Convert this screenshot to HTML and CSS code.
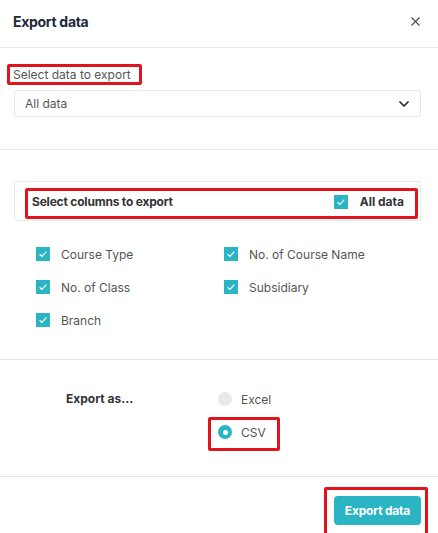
FILE: index.html
```html
<!DOCTYPE html>
<html>
<head>
<meta charset="utf-8">
<link rel="stylesheet" href="styles.css">
</head>
<body>
<div class="modal">
  <div class="header">
    <h1 class="title">Export data</h1>
    <button class="close" aria-label="Close">
      <svg width="9" height="9" viewBox="0 0 9 9"><path d="M0.5 0.5 L8.5 8.5 M8.5 0.5 L0.5 8.5" stroke="#4a4a4a" stroke-width="1.1" fill="none"/></svg>
    </button>
  </div>

  <div class="section section-data">
    <div class="mark mark-label"><span class="label">Select data to export</span></div>
    <div class="select">
      <span class="select-value">All data</span>
      <svg class="chevron" width="10" height="6" viewBox="0 0 10 6"><path d="M1 1 L5 5 L9 1" stroke="#1f2a36" stroke-width="1.7" fill="none" stroke-linecap="round" stroke-linejoin="round"/></svg>
    </div>
  </div>

  <div class="section section-cols">
    <div class="cols-box">
      <div class="mark mark-cols">
        <span class="cols-title">Select columns to export</span>
        <span class="check-item all">
          <span class="check"><svg width="14" height="14" viewBox="0 0 14 14"><path d="M3.6 7.3 L5.9 9.4 L10.3 4.6" stroke="#fff" stroke-width="1.2" fill="none"/></svg></span>
          <span class="all-text">All data</span>
        </span>
      </div>
    </div>
    <div class="cols-grid">
      <span class="check-item"><span class="check"><svg width="14" height="14" viewBox="0 0 14 14"><path d="M3.6 7.3 L5.9 9.4 L10.3 4.6" stroke="#fff" stroke-width="1.2" fill="none"/></svg></span><span class="item-text">Course Type</span></span>
      <span class="check-item"><span class="check"><svg width="14" height="14" viewBox="0 0 14 14"><path d="M3.6 7.3 L5.9 9.4 L10.3 4.6" stroke="#fff" stroke-width="1.2" fill="none"/></svg></span><span class="item-text">No. of Course Name</span></span>
      <span class="check-item"><span class="check"><svg width="14" height="14" viewBox="0 0 14 14"><path d="M3.6 7.3 L5.9 9.4 L10.3 4.6" stroke="#fff" stroke-width="1.2" fill="none"/></svg></span><span class="item-text">No. of Class</span></span>
      <span class="check-item"><span class="check"><svg width="14" height="14" viewBox="0 0 14 14"><path d="M3.6 7.3 L5.9 9.4 L10.3 4.6" stroke="#fff" stroke-width="1.2" fill="none"/></svg></span><span class="item-text">Subsidiary</span></span>
      <span class="check-item"><span class="check"><svg width="14" height="14" viewBox="0 0 14 14"><path d="M3.6 7.3 L5.9 9.4 L10.3 4.6" stroke="#fff" stroke-width="1.2" fill="none"/></svg></span><span class="item-text">Branch</span></span>
    </div>
  </div>

  <div class="section section-format">
    <span class="format-label">Export as...</span>
    <div class="radios">
      <div class="radio-row excel"><span class="radio"></span><span class="radio-text">Excel</span></div>
      <div class="mark mark-csv"><div class="radio-row"><span class="radio on"></span><span class="radio-text">CSV</span></div></div>
    </div>
  </div>

  <div class="footer">
    <div class="mark mark-btn"><button class="export-btn">Export data</button></div>
  </div>
</div>
</body>
</html>
```

FILE: styles.css
```css
* { box-sizing: border-box; }
html, body { margin: 0; padding: 0; background: #fff; }
body {
  font-family: Inter, "Open Sans", "Liberation Sans", sans-serif;
  color: #555;
  width: 438px;
  height: 533px;
  overflow: hidden;
}
.modal { width: 438px; }

.header {
  height: 48px;
  display: flex;
  align-items: center;
  justify-content: space-between;
  padding: 0 18px 5px 13px;
  border-bottom: 1px solid #eaeaea;
}
.title {
  margin: 0;
  font-size: 14px;
  font-weight: 700;
  color: #1c2a3a;
  letter-spacing: -0.3px;
}
.close {
  border: 0;
  background: none;
  padding: 0;
  width: 9px;
  height: 9px;
  display: flex;
}

.mark {
  border: 3px solid #e0141c;
  border-radius: 2px;
}

.section { border-bottom: 1px solid #e6e6e6; }

.section-data {
  display: flex;
  flex-direction: column;
  align-items: flex-start;
  padding: 16px 17px 32px 0;
}
.mark-label {
  margin-left: 7px;
  padding: 0 8px 0 3px;
  height: 21px;
}
.label {
  font-size: 12px;
  line-height: 15px;
  display: block;
  color: #555;
}
.select {
  align-self: stretch;
  margin: 5px 0 0 14px;
  height: 27px;
  border: 1px solid #e8e8e8;
  border-radius: 2px;
  display: flex;
  align-items: center;
  justify-content: space-between;
  padding: 0 11px 0 10px;
}
.select-value { font-size: 12px; color: #555; }

.section-cols { padding: 31px 17px 32px 14px; }
.cols-box {
  border: 1px solid #ececec;
  height: 40px;
  padding: 6px 2px 1px 10px;
}
.mark-cols {
  height: 31px;
  display: flex;
  align-items: center;
  justify-content: space-between;
  padding: 0 11px 4px 4px;
}
.cols-title {
  font-size: 12px;
  font-weight: 700;
  color: #333;
  letter-spacing: -0.2px;
}
.check-item {
  display: flex;
  align-items: center;
  height: 14px;
}
.check {
  width: 14px;
  height: 14px;
  background: #2bb5c4;
  display: flex;
  flex: none;
}
.all .check { margin-right: 12px; }
.all-text { font-size: 12px; font-weight: 700; color: #333; }

.cols-grid {
  display: grid;
  grid-template-columns: 188px 1fr;
  row-gap: 19px;
  padding: 26px 0 0 22px;
}
.item-text {
  font-size: 12px;
  color: #555;
  margin-left: 11px;
}

.section-format {
  display: flex;
  align-items: flex-start;
  padding: 32px 0 25px 66px;
}
.format-label {
  width: 142px;
  font-size: 12px;
  font-weight: 700;
  color: #333;
  line-height: 14px;
}
.radios { display: flex; flex-direction: column; }
.radio-row {
  display: flex;
  align-items: center;
  height: 14px;
}
.excel { padding-left: 10px; margin-bottom: 11px; }
.radio {
  width: 14px;
  height: 14px;
  border-radius: 50%;
  background: #e9e9e9;
  flex: none;
}
.radio.on {
  background: #2bb5c4;
  display: flex;
  align-items: center;
  justify-content: center;
}
.radio.on::after {
  content: "";
  width: 5px;
  height: 5px;
  border-radius: 50%;
  background: #fff;
}
.radio-text { font-size: 12px; color: #555; margin-left: 9px; }
.mark-csv {
  height: 34px;
  padding: 5px 11px 9px 7px;
}

.footer {
  display: flex;
  justify-content: flex-end;
  padding: 10px 10px 0 0;
}
.mark-btn {
  padding: 6px 4px 9px 7px;
}
.export-btn {
  display: block;
  width: 87px;
  height: 29px;
  border: 0;
  border-radius: 4px;
  background: #2bb5c4;
  color: #fff;
  font-family: Inter, "Open Sans", "Liberation Sans", sans-serif;
  font-size: 12px;
  font-weight: 700;
  letter-spacing: -0.2px;
  padding: 0;
}
```
